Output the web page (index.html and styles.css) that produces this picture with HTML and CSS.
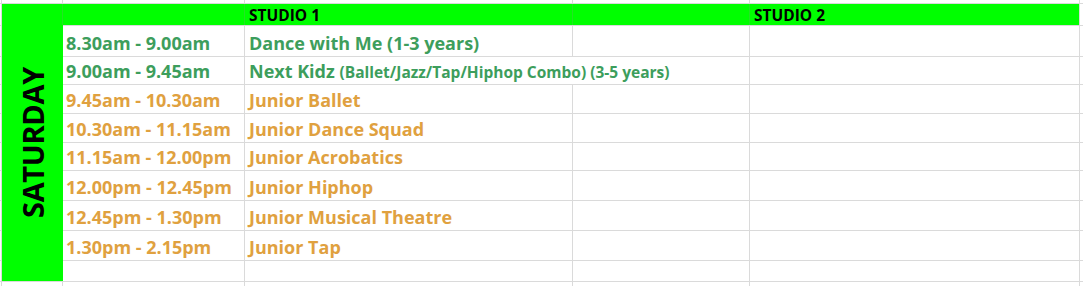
FILE: index.html
```html
<!DOCTYPE html>
<html>
<head>
<meta charset="utf-8">
<link rel="stylesheet" href="styles.css">
</head>
<body>
<div class="sheet">
  <div class="c"></div><div class="c"></div><div class="c"></div><div class="c"></div><div class="c"></div><div class="c"></div><div class="c"></div>

  <div class="day"><span class="day-text">SATURDAY</span></div>

  <div class="c"></div><div class="c hd"></div><div class="c hd"><span class="hd-text">STUDIO 1</span></div><div class="c hd"></div><div class="c hd"><span class="hd-text">STUDIO 2</span></div><div class="c"></div>

  <div class="c"></div><div class="c t green">8.30am - 9.00am</div><div class="c t green">Dance with Me (1-3 years)</div><div class="c"></div><div class="c"></div><div class="c"></div>
  <div class="c"></div><div class="c t green">9.00am - 9.45am</div><div class="c t green wide">Next Kidz&nbsp;<span class="small">(Ballet/Jazz/Tap/Hiphop Combo) (3-5 years)</span></div><div class="c"></div><div class="c"></div>
  <div class="c"></div><div class="c t orange">9.45am - 10.30am</div><div class="c t orange">Junior Ballet</div><div class="c"></div><div class="c"></div><div class="c"></div>
  <div class="c"></div><div class="c t orange">10.30am - 11.15am</div><div class="c t orange">Junior Dance Squad</div><div class="c"></div><div class="c"></div><div class="c"></div>
  <div class="c"></div><div class="c t orange">11.15am - 12.00pm</div><div class="c t orange">Junior Acrobatics</div><div class="c"></div><div class="c"></div><div class="c"></div>
  <div class="c"></div><div class="c t orange">12.00pm - 12.45pm</div><div class="c t orange">Junior Hiphop</div><div class="c"></div><div class="c"></div><div class="c"></div>
  <div class="c"></div><div class="c t orange">12.45pm - 1.30pm</div><div class="c t orange">Junior Musical Theatre</div><div class="c"></div><div class="c"></div><div class="c"></div>
  <div class="c"></div><div class="c t orange">1.30pm - 2.15pm</div><div class="c t orange">Junior Tap</div><div class="c"></div><div class="c"></div><div class="c"></div>
  <div class="c"></div><div class="c"></div><div class="c"></div><div class="c"></div><div class="c"></div><div class="c"></div>

  <div class="c"></div><div class="c"></div><div class="c"></div><div class="c"></div><div class="c"></div><div class="c"></div><div class="c"></div>
</div>
</body>
</html>
```

FILE: styles.css
```css
html, body {
  margin: 0;
  padding: 0;
  background: #ffffff;
  overflow: hidden;
}

.sheet {
  width: 1083px;
  height: 286px;
  display: grid;
  grid-template-columns: 1px 60px 181px 327px 176px 329px 3px;
  grid-template-rows: 3px 21px 30px 27px 28px 28px 27px 29px 29px 29px 20px 4px;
  gap: 1px;
  background: #dadada;
  font-family: "Open Sans", "Liberation Sans", sans-serif;
  overflow: hidden;
}

.c {
  background: #ffffff;
  min-width: 0;
  white-space: nowrap;
}

.day {
  grid-column: 2;
  grid-row: 2 / 12;
  margin-right: -1px;
  background: #00ff00;
  display: flex;
  align-items: center;
  justify-content: center;
  overflow: hidden;
}

.day-text {
  writing-mode: vertical-rl;
  transform: rotate(180deg);
  font-size: 29px;
  font-weight: 700;
  color: #000000;
  line-height: 1;
  letter-spacing: -0.3px;
}

.hd {
  background: #00ff00;
  box-shadow: -1px 0 0 #22e522;
  display: flex;
  align-items: flex-end;
  padding-left: 4px;
}

.hd-text {
  font-size: 15.5px;
  font-weight: 700;
  color: #000000;
  line-height: 1;
  padding-bottom: 2px;
}

.t {
  display: flex;
  align-items: flex-end;
  padding-left: 3px;
  font-size: 18px;
  font-weight: 700;
  line-height: 1;
  padding-bottom: 4px;
}

.t + .t {
  padding-left: 4px;
}

.wide {
  grid-column: span 2;
}

.small {
  font-size: 15.5px;
}

.green {
  color: #3d9e5c;
}

.orange {
  color: #e0a13f;
}
```
